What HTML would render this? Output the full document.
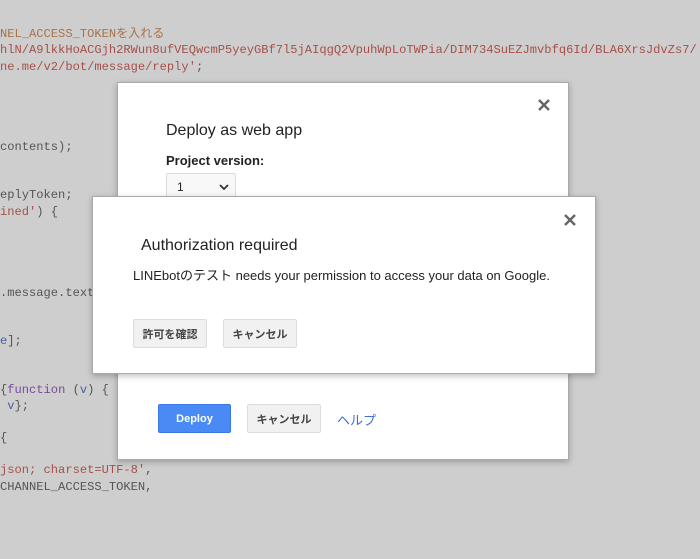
<!DOCTYPE html>
<html><head><meta charset="utf-8"><style>
body{margin:0;width:700px;height:559px;background:#cecece;position:relative;overflow:hidden;font-family:"Liberation Sans","Noto Sans CJK JP",sans-serif}
.c{position:absolute;left:0;font-family:"Liberation Mono","Noto Sans CJK JP",monospace;font-size:12.1px;color:#555;white-space:pre;line-height:14px}
.r{color:#a6504a}.o{color:#a8734a}.p{color:#7c4a9c}.b{color:#4a5aa8}
.d{position:absolute;background:#fff;border:1px solid #aaa;box-shadow:0 2px 6px rgba(0,0,0,.25)}
.x{position:absolute;width:14px;height:14px}
.btn{position:absolute;height:27px;border:1px solid #ddd;border-radius:2px;background:#f1f1f1;font-size:11px;font-weight:bold;color:#444;display:flex;align-items:center;justify-content:center}
</style></head><body>
<div class="c o" style="top:27px">NEL_ACCESS_TOKENを入れる</div>
<div class="c r" style="top:43px">hlN/A9lkkHoACGjh2RWun8ufVEQwcmP5yeyGBf7l5jAIqgQ2VpuhWpLoTWPia/DIM734SuEZJmvbfq6Id/BLA6XrsJdvZs7/</div>
<div class="c" style="top:60px"><span class="r">ne.me/v2/bot/message/reply'</span>;</div>
<div class="c" style="top:140px">contents);</div>
<div class="c" style="top:188px">eplyToken;</div>
<div class="c" style="top:205px"><span class="r">ined'</span>) {</div>
<div class="c" style="top:286px">.message.text</div>
<div class="c" style="top:334px"><span class="b">e</span>];</div>
<div class="c" style="top:383px">{<span class="p">function</span> (<span class="b">v</span>) {</div>
<div class="c" style="top:399px"> <span class="b">v</span>};</div>
<div class="c" style="top:431px">{</div>
<div class="c" style="top:463px"><span class="r">json; charset=UTF-8'</span>,</div>
<div class="c" style="top:480px">CHANNEL_ACCESS_TOKEN,</div>

<div class="d" style="left:117px;top:82px;width:450px;height:376px">
  <svg class="x" style="left:419px;top:15px" viewBox="0 0 14 14"><path d="M2 2L12 12M12 2L2 12" stroke="#666" stroke-width="2.4"/></svg>
  <div style="position:absolute;left:48px;top:39px;font-size:16px;color:#222">Deploy as web app</div>
  <div style="position:absolute;left:48px;top:70px;font-size:13px;font-weight:bold;color:#222">Project version:</div>
  <div style="position:absolute;left:48px;top:90px;width:68px;height:26px;border:1px solid #ddd;border-radius:2px;background:#f8f8f8;font-size:12px;line-height:26px;text-indent:10px;color:#222">1<svg style="position:absolute;left:52px;top:10px" width="10" height="7" viewBox="0 0 10 7"><path d="M1 1L5 5L9 1" stroke="#333" stroke-width="1.8" fill="none"/></svg></div>
  <div class="btn" style="left:40px;top:321px;width:71px;background:#4a8af4;border-color:#3b78e7;color:#fff">Deploy</div>
  <div class="btn" style="left:129px;top:321px;width:72px">キャンセル</div>
  <div style="position:absolute;left:219px;top:327px;font-size:13px;color:#3a6fd8">ヘルプ</div>
</div>

<div class="d" style="left:92px;top:196px;width:502px;height:176px">
  <svg class="x" style="left:470px;top:16px" viewBox="0 0 14 14"><path d="M2 2L12 12M12 2L2 12" stroke="#666" stroke-width="2.4"/></svg>
  <div style="position:absolute;left:48px;top:40px;font-size:16px;color:#222">Authorization required</div>
  <div style="position:absolute;left:40px;top:68px;font-size:13px;color:#222">LINEbotのテスト needs your permission to access your data on Google.</div>
  <div class="btn" style="left:40px;top:122px;width:72px">許可を確認</div>
  <div class="btn" style="left:130px;top:122px;width:72px">キャンセル</div>
</div>
</body></html>
